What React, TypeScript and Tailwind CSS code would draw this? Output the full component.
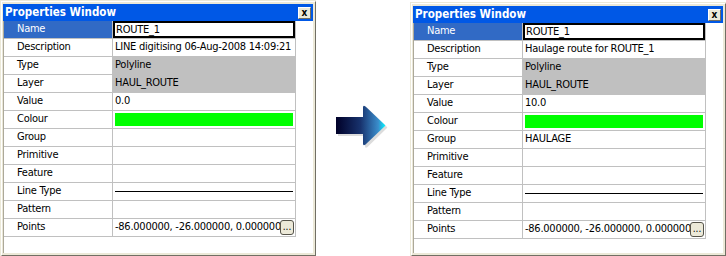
import React from "react";

type Row = { label: string; value?: string; kind?: "edit" | "ro" | "colour" | "line" | "points" | "text" };

const FONT = { fontFamily: '"DejaVu Sans Condensed", "DejaVu Sans", Tahoma, sans-serif' };

function Cell({ row }: { row: Row }) {
  const k = row.kind ?? "text";
  if (k === "edit") {
    return (
      <div className="w-[183px] h-full border-r border-[#c0c0c0] flex items-stretch">
        <div className="flex-1 border-2 border-black bg-white pl-[1px] flex items-center leading-none">
          {row.value}
        </div>
      </div>
    );
  }
  if (k === "ro") {
    return (
      <div className="w-[183px] h-full border-r border-[#c0c0c0] bg-[#c0c0c0] pl-[2px] flex items-center">
        {row.value}
      </div>
    );
  }
  if (k === "colour") {
    return (
      <div className="w-[183px] h-full border-r border-[#c0c0c0] flex items-center pl-[2px] pr-[2px]">
        <div className="w-full h-[13px] bg-[#00ff00]" />
      </div>
    );
  }
  if (k === "line") {
    return (
      <div className="w-[183px] h-full border-r border-[#c0c0c0] flex items-center pl-[2px] pr-[2px]">
        <div className="w-full h-[1px] bg-black" />
      </div>
    );
  }
  if (k === "points") {
    return (
      <div className="w-[183px] h-full border-r border-[#c0c0c0] flex items-center pl-[2px] relative overflow-hidden">
        <span className="whitespace-nowrap">-86.000000, -26.000000, 0.000000</span>
        <div className="absolute right-[1px] top-[1px] w-[14px] h-[15px] rounded-[3px] border border-[#55534a] bg-[#ece9d8] flex items-end justify-center text-[10px] leading-[10px] pb-[2px] tracking-normal">
          ...
        </div>
      </div>
    );
  }
  return (
    <div className="w-[183px] h-full border-r border-[#c0c0c0] pl-[2px] flex items-center whitespace-nowrap overflow-hidden">
      {row.value}
    </div>
  );
}

function PropWindow({ rows, className }: { rows: Row[]; className?: string }) {
  return (
    <div
      className={
        "w-[316px] bg-[#ece9d8] border-l border-t border-[#ece9d8] flex flex-col text-[11px] tracking-[-0.25px] text-black " +
        (className ?? "")
      }
      style={FONT}
    >
      <div className="flex flex-col flex-1 border-l border-t border-white border-r border-b border-r-[#716f64] border-b-[#716f64] pl-[1px] pr-[2px] pt-[2px] pb-[2px]">
        <div className="h-[17px] bg-[#0058e6] text-white font-bold text-[11.5px] tracking-normal flex items-center pl-[2px] pr-[2px] shrink-0">
          <span className="flex-1">Properties Window</span>
          <div className="w-[13px] h-[12px] bg-[#ece9d8] border border-t-white border-l-white border-r-[#716f64] border-b-[#716f64] flex items-center justify-center text-black text-[10px] leading-none font-bold">
            x
          </div>
        </div>
        <div className="flex-1 bg-white border-l border-[#aca899] flex flex-col">
          {rows.map((r, i) => (
            <div key={i} className="h-[18px] flex border-b border-[#c0c0c0] w-[292px]">
              <div
                className={
                  "w-[109px] h-full border-r border-[#c0c0c0] pl-[13px] flex items-center " +
                  (i === 0 ? "bg-[#316ac5] text-white" : "")
                }
              >
                {r.label}
              </div>
              <Cell row={r} />
            </div>
          ))}
        </div>
      </div>
    </div>
  );
}

function Arrow() {
  return (
    <svg width="52" height="44" viewBox="0 0 52 44">
      <defs>
        <linearGradient id="ag" x1="0" y1="0" x2="1" y2="0">
          <stop offset="0" stopColor="#000028" />
          <stop offset="0.5" stopColor="#18336e" />
          <stop offset="0.72" stopColor="#2d6aa8" />
          <stop offset="0.86" stopColor="#3a8ecc" />
          <stop offset="1" stopColor="#00f4ff" />
        </linearGradient>
      </defs>
      <path
        d="M1 13 H28 V3 Q28 0 30.5 2 L50 21 Q50.5 21.5 50 22 L30.5 41 Q28 43 28 40 V30 H1 Z"
        fill="#9a9a9a"
        opacity="0.35"
        transform="translate(1,1)"
      />
      <path
        d="M0 12 H27 V2.5 Q27 -0.5 29.5 1.5 L49 20 Q49.5 20.5 49 21 L29.5 39.5 Q27 41.5 27 38.5 V29 H0 Z"
        fill="url(#ag)"
      />
    </svg>
  );
}

const left: Row[] = [
  { label: "Name", value: "ROUTE_1", kind: "edit" },
  { label: "Description", value: "LINE digitising 06-Aug-2008 14:09:21" },
  { label: "Type", value: "Polyline", kind: "ro" },
  { label: "Layer", value: "HAUL_ROUTE", kind: "ro" },
  { label: "Value", value: "0.0" },
  { label: "Colour", kind: "colour" },
  { label: "Group", value: "" },
  { label: "Primitive", value: "" },
  { label: "Feature", value: "" },
  { label: "Line Type", kind: "line" },
  { label: "Pattern", value: "" },
  { label: "Points", kind: "points" },
];

const right: Row[] = [
  { label: "Name", value: "ROUTE_1", kind: "edit" },
  { label: "Description", value: "Haulage route for ROUTE_1" },
  { label: "Type", value: "Polyline", kind: "ro" },
  { label: "Layer", value: "HAUL_ROUTE", kind: "ro" },
  { label: "Value", value: "10.0" },
  { label: "Colour", kind: "colour" },
  { label: "Group", value: "HAULAGE" },
  { label: "Primitive", value: "" },
  { label: "Feature", value: "" },
  { label: "Line Type", kind: "line" },
  { label: "Pattern", value: "" },
  { label: "Points", kind: "points" },
];

export default function App() {
  return (
    <div className="w-[726px] h-[256px] bg-white flex overflow-hidden">
      <PropWindow rows={left} className="h-[256px]" />
      <div className="w-[94px] flex items-center justify-center pr-[3px] pb-[2px]">
        <Arrow />
      </div>
      <PropWindow rows={right} className="h-[254px] mt-[2px]" />
    </div>
  );
}
